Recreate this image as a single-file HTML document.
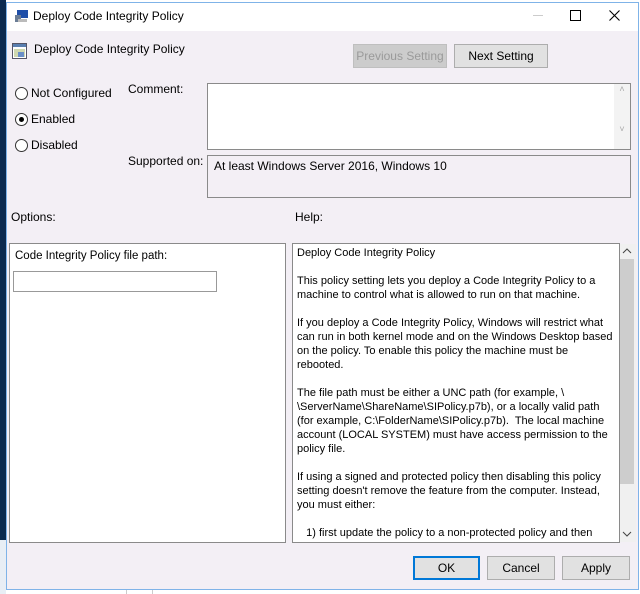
<!DOCTYPE html>
<html><head><style>
*{margin:0;padding:0;box-sizing:border-box}
body{width:640px;height:594px;background:#fff;font-family:"Liberation Sans",sans-serif;font-size:11.5px;color:#000;position:relative;overflow:hidden}
.a{position:absolute}
.win{left:6px;top:2px;width:633px;height:588px;background:#f3eff5;border:1px solid #7fb3e8}
.title{left:7px;top:3px;width:631px;height:28px;background:#fff}
.box{background:#fff;border:1px solid #8a8a8a}
.btn{background:#e1e1e1;border:1px solid #adadad;text-align:center;line-height:22px;font-size:12px}
.radio{width:13px;height:13px;border:1px solid #333;border-radius:50%;background:#fff}
.help div{height:14px;white-space:nowrap;font-size:11px}
</style></head><body>
<div class="a" style="left:0;top:0;width:6px;height:540px;background:#0b2a4f"></div>
<div class="a" style="left:0;top:540px;width:6px;height:54px;background:#e8eef5"></div>
<div class="a" style="left:126px;top:589px;width:27px;height:5px;border-left:1px solid #ccc;border-right:1px solid #ccc"></div>
<div class="a win"></div>
<div class="a title"></div>
<svg class="a" style="left:14px;top:9px" width="16" height="14"><rect x="3" y="1" width="11" height="8" fill="#1f4fa8"/><rect x="1" y="6" width="6" height="7" fill="#6b7d96"/><rect x="4" y="10" width="9" height="3" fill="#bbb"/></svg>
<div class="a" style="left:33px;top:9px;font-size:12px">Deploy Code Integrity Policy</div>
<div class="a" style="left:533px;top:15px;width:10px;height:1px;background:#ccc"></div>
<div class="a" style="left:570px;top:10px;width:11px;height:11px;border:1px solid #000"></div>
<svg class="a" style="left:609px;top:10px" width="11" height="11"><path d="M0.5 0.5L10.5 10.5M10.5 0.5L0.5 10.5" stroke="#000" stroke-width="1.1"/></svg>
<svg class="a" style="left:12px;top:43px" width="15" height="16"><rect x="0.5" y="0.5" width="14" height="15" fill="#fff" stroke="#556"/><rect x="1" y="1" width="13" height="3" fill="#5a7fb0"/><rect x="2" y="6" width="11" height="8" fill="#cfd8b0"/><rect x="6" y="9" width="6" height="5" fill="#6a8fc8"/></svg>
<div class="a" style="left:34px;top:42px;font-size:12px">Deploy Code Integrity Policy</div>
<div class="a btn" style="left:353px;top:44px;width:94px;height:24px;background:#ccc;border-color:#bfbfbf;color:#9a9a9a">Previous Setting</div>
<div class="a btn" style="left:454px;top:44px;width:94px;height:24px">Next Setting</div>
<div class="a radio" style="left:15px;top:87px"></div><div class="a" style="left:31px;top:86px;font-size:12px">Not Configured</div>
<div class="a radio" style="left:15px;top:113px"><div style="width:5px;height:5px;background:#000;border-radius:50%;margin:3px"></div></div><div class="a" style="left:31px;top:112px;font-size:12px">Enabled</div>
<div class="a radio" style="left:15px;top:139px"></div><div class="a" style="left:31px;top:138px;font-size:12px">Disabled</div>
<div class="a" style="left:128px;top:82px;font-size:12px">Comment:</div>
<div class="a" style="left:128px;top:154px;font-size:12px">Supported on:</div>
<div class="a box" style="left:207px;top:83px;width:424px;height:67px"></div>
<div class="a" style="left:614px;top:84px;width:16px;height:65px;background:#f3f3f3;color:#aaa;font-size:9px;text-align:center">˄<br><br><br><br>˅</div>
<div class="a box" style="left:207px;top:155px;width:424px;height:43px;background:#f3eff5"></div>
<div class="a" style="left:214px;top:159px;font-size:12px">At least Windows Server 2016, Windows 10</div>
<div class="a" style="left:11px;top:210px;font-size:12px">Options:</div>
<div class="a" style="left:295px;top:210px;font-size:12px">Help:</div>
<div class="a box" style="left:9px;top:243px;width:277px;height:300px"></div>
<div class="a" style="left:15px;top:250px">Code Integrity Policy file path:</div>
<div class="a box" style="left:13px;top:271px;width:204px;height:21px;border-color:#999"></div>
<div class="a box help" style="left:292px;top:243px;width:328px;height:300px;padding:3px 0 0 4px;overflow:hidden">
<div>Deploy Code Integrity Policy</div><div></div>
<div>This policy setting lets you deploy a Code Integrity Policy to a</div>
<div>machine to control what is allowed to run on that machine.</div><div></div>
<div>If you deploy a Code Integrity Policy, Windows will restrict what</div>
<div>can run in both kernel mode and on the Windows Desktop based</div>
<div>on the policy. To enable this policy the machine must be</div>
<div>rebooted.</div><div></div>
<div>The file path must be either a UNC path (for example, \</div>
<div>\ServerName\ShareName\SIPolicy.p7b), or a locally valid path</div>
<div>(for example, C:\FolderName\SIPolicy.p7b).&nbsp; The local machine</div>
<div>account (LOCAL SYSTEM) must have access permission to the</div>
<div>policy file.</div><div></div>
<div>If using a signed and protected policy then disabling this policy</div>
<div>setting doesn't remove the feature from the computer. Instead,</div>
<div>you must either:</div><div></div>
<div>&nbsp;&nbsp;&nbsp;1) first update the policy to a non-protected policy and then</div>
</div>
<div class="a" style="left:620px;top:244px;width:16px;height:298px;background:#f0f0f0"></div>
<div class="a" style="left:620px;top:259px;width:14px;height:225px;background:#cdcdcd"></div>
<svg class="a" style="left:622px;top:248px" width="10" height="6"><path d="M1 5L5 1L9 5" stroke="#444" fill="none"/></svg>
<svg class="a" style="left:622px;top:531px" width="10" height="6"><path d="M1 1L5 5L9 1" stroke="#444" fill="none"/></svg>
<div class="a btn" style="left:413px;top:556px;width:67px;height:24px;border:2px solid #0078d7;line-height:20px">OK</div>
<div class="a btn" style="left:487px;top:556px;width:68px;height:24px">Cancel</div>
<div class="a btn" style="left:562px;top:556px;width:68px;height:24px">Apply</div>
</body></html>
